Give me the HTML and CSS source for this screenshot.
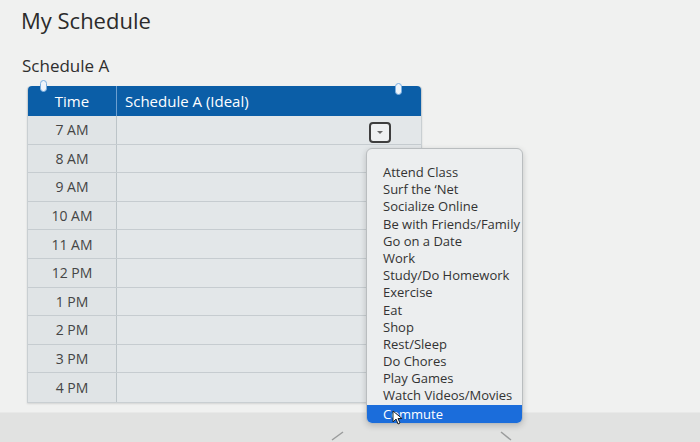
FILE: index.html
```html
<!DOCTYPE html>
<html lang="en">
<head>
<meta charset="utf-8">
<title>My Schedule</title>
<link rel="stylesheet" href="styles.css">
</head>
<body>
<div class="page">
  <h1 class="title">My Schedule</h1>
  <h2 class="subtitle">Schedule A</h2>
  <div class="table">
    <span class="handle handle-left"></span>
    <span class="handle handle-right"></span>
    <div class="row head">
      <div class="cell time">Time</div>
      <div class="cell act">Schedule A (Ideal)</div>
    </div>
    <div class="row"><div class="cell time">7 AM</div><div class="cell act"><span class="select-btn"><svg width="8" height="5" viewBox="0 0 8 5"><path d="M1 1h6L4 4z" fill="#666"/></svg></span></div></div>
    <div class="row"><div class="cell time">8 AM</div><div class="cell act"></div></div>
    <div class="row"><div class="cell time">9 AM</div><div class="cell act"></div></div>
    <div class="row"><div class="cell time">10 AM</div><div class="cell act"></div></div>
    <div class="row"><div class="cell time">11 AM</div><div class="cell act"></div></div>
    <div class="row"><div class="cell time">12 PM</div><div class="cell act"></div></div>
    <div class="row"><div class="cell time">1 PM</div><div class="cell act"></div></div>
    <div class="row"><div class="cell time">2 PM</div><div class="cell act"></div></div>
    <div class="row"><div class="cell time">3 PM</div><div class="cell act"></div></div>
    <div class="row"><div class="cell time">4 PM</div><div class="cell act"></div></div>
  </div>
</div>
<div class="band">
  <svg class="chev chev-l" width="14" height="10" viewBox="0 0 14 10"><path d="M13 1L2 9" stroke="#9a9c9c" stroke-width="1.5" fill="none"/></svg>
  <svg class="chev chev-r" width="14" height="10" viewBox="0 0 14 10"><path d="M1 1l10 8" stroke="#9a9c9c" stroke-width="1.5" fill="none"/></svg>
</div>
<ul class="menu">
  <li>Attend Class</li>
  <li>Surf the ‘Net</li>
  <li>Socialize Online</li>
  <li>Be with Friends/Family</li>
  <li>Go on a Date</li>
  <li>Work</li>
  <li>Study/Do Homework</li>
  <li>Exercise</li>
  <li>Eat</li>
  <li>Shop</li>
  <li>Rest/Sleep</li>
  <li>Do Chores</li>
  <li>Play Games</li>
  <li>Watch Videos/Movies</li>
  <li class="selected">Commute</li>
</ul>
<svg class="cursor" width="11" height="15" viewBox="0 0 11 15"><path d="M1 1v11l3-3 2 5 2-1-2-4.5h4z" fill="#fff" stroke="#222" stroke-width="1"/></svg>
</body>
</html>
```
FILE: styles.css
```css
html, body {
  margin: 0;
  padding: 0;
}
body {
  width: 700px;
  height: 442px;
  overflow: hidden;
  background: #f0f1f0;
  font-family: "Open Sans", "Noto Sans", sans-serif;
  color: #2e2e2e;
  position: relative;
}
.page {
  padding: 5px 0 0 21px;
  height: 412px;
  box-sizing: border-box;
}
.title {
  margin: 0;
  font-size: 22px;
  font-weight: 400;
  line-height: 30px;
  color: #2b2b2b;
}
.subtitle {
  margin: 19px 0 0 1px;
  font-size: 17px;
  font-weight: 400;
  line-height: 24px;
  color: #2e2e2e;
}
.table {
  position: relative;
  margin: 8px 0 0 6px;
  width: 393px;
  border: 1px solid #c9cfd2;
  border-top: none;
  border-radius: 4px 4px 0 0;
  box-shadow: 0 1px 2px rgba(0,0,0,0.12);
}
.row {
  display: flex;
  height: 28.6px;
  background: #e3e7e9;
  border-bottom: 1px solid #c6ccd0;
  box-sizing: border-box;
}
.row:last-child {
  border-bottom: none;
}
.row.head {
  height: 30px;
  background: #0b5ea7;
  border-radius: 4px 4px 0 0;
  border-bottom: none;
  color: #fff;
  font-size: 15px;
}
.cell {
  display: flex;
  align-items: center;
}
.time {
  width: 88px;
  justify-content: center;
  border-right: 1px solid #bcc4c8;
  font-size: 14px;
  color: #454545;
  background: #e0e4e6;
}
.head .time {
  background: transparent;
  color: #fff;
  font-size: 15px;
  font-weight: 500;
  border-right: 1px solid #6c9fd0;
}
.act {
  flex: 1;
  padding-left: 8px;
  justify-content: space-between;
}
.head .act {
  padding-left: 8px;
  font-weight: 500;
}
.select-btn {
  margin-left: auto;
  margin-right: 30px;
  margin-top: 5px;
  width: 18px;
  height: 17px;
  border: 2px solid #3e3e3e;
  border-radius: 4px;
  background: #eef0f1;
  display: flex;
  align-items: center;
  justify-content: center;
}
.handle {
  position: absolute;
  width: 5px;
  height: 10px;
  border: 1.5px solid #79aee0;
  border-radius: 4px;
  background: #eef4fa;
  z-index: 2;
}
.handle-left {
  left: 12px;
  top: -6px;
}
.handle-right {
  left: 367px;
  top: -3px;
}
.band {
  position: relative;
  height: 30px;
  background: #e1e2e1;
  border-top: 1px solid #e8e9e8;
}
.chev {
  position: absolute;
  top: 18px;
}
.chev-l { left: 330px; }
.chev-r { left: 500px; }
.menu {
  position: absolute;
  left: 366px;
  top: 148px;
  width: 157px;
  margin: 0;
  padding: 15px 0 0 0;
  list-style: none;
  background: #eceeef;
  border: 1px solid #b9bdbf;
  border-radius: 6px;
  box-shadow: 0 2px 6px rgba(0,0,0,0.18);
  box-sizing: border-box;
  font-size: 13px;
  color: #333;
  overflow: hidden;
}
.menu li {
  height: 17.2px;
  line-height: 17.2px;
  padding-left: 16px;
  white-space: nowrap;
}
.menu li.selected {
  background: #1b6ddb;
  color: #fff;
  height: 18px;
  line-height: 18px;
}
.cursor {
  position: absolute;
  left: 392px;
  top: 410px;
}
```
